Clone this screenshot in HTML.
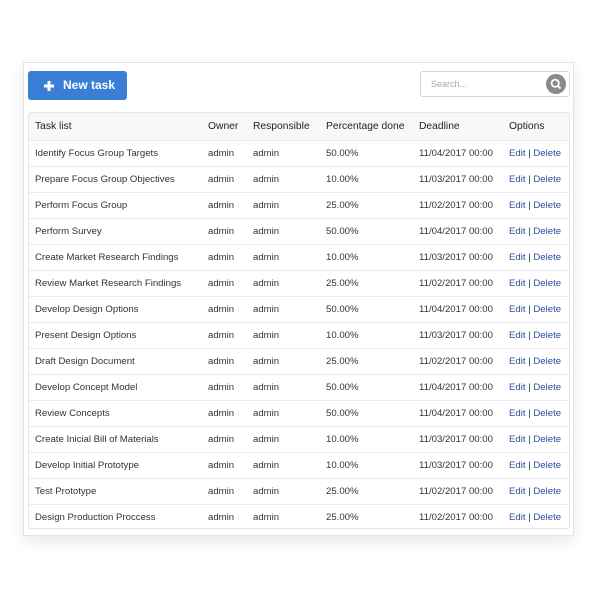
<!DOCTYPE html>
<html><head><style>
body{margin:0;width:600px;height:600px;background:#fff;font-family:"Liberation Sans",Arial,sans-serif;position:relative;}
.card{position:absolute;left:23px;top:62px;width:551px;height:474px;border:1px solid #e3e3e8;box-shadow:0 6px 14px rgba(0,0,0,0.09);background:#fff;box-sizing:border-box;}
.btn{position:absolute;left:28px;top:71px;width:99px;height:29px;background:#3a7fd5;border-radius:3px;color:#fff;font-weight:bold;font-size:12px;line-height:29px;}
.btn svg{position:absolute;left:16px;top:10px;}
.btn .t{position:absolute;left:35px;}
.search{position:absolute;left:420px;top:71px;width:150px;height:26px;border:1px solid #d8d8dc;border-radius:3px;box-sizing:border-box;}
.search span{position:absolute;left:10px;top:7px;font-size:9px;color:#aaa;}
.search .ic{position:absolute;left:125px;top:2px;width:20px;height:20px;border-radius:50%;background:#8a8a8a;}
.tbl{position:absolute;left:28px;top:112px;width:542px;height:417px;border:1px solid #e6e6ea;border-radius:3px;box-sizing:border-box;overflow:hidden;}
.row{position:absolute;left:0;width:542px;height:26px;border-top:1px solid #ebebef;font-size:9.6px;color:#333;line-height:25px;}
.row.h{border-top:none;background:#f7f8fa;height:27px;line-height:27px;font-size:10.3px;color:#222;}
.row div{position:absolute;top:0;white-space:nowrap;}
.c1{left:6px}.c2{left:179px}.c3{left:224px}.c4{left:297px}.c5{left:390px}.c6{left:480px}
.c6 a{color:#2a4f9a;text-decoration:none}
</style></head><body>
<div class="card"></div>
<div class="btn"><svg width="10" height="10"><rect x="3.5" y="0" width="3" height="10" fill="#fff"/><rect x="0" y="3.5" width="10" height="3" fill="#fff"/></svg><span class="t">New task</span></div>
<div class="search"><span>Search...</span><div class="ic"><svg width="20" height="20"><circle cx="9.2" cy="9.2" r="3.6" stroke="#fff" stroke-width="1.8" fill="none"/><line x1="11.8" y1="11.8" x2="14.5" y2="14.5" stroke="#fff" stroke-width="2"/></svg></div></div>
<div class="tbl">
<div class="row h" style="top:0"><div class="c1">Task list</div><div class="c2">Owner</div><div class="c3">Responsible</div><div class="c4">Percentage done</div><div class="c5">Deadline</div><div class="c6">Options</div></div>
<script>
var d=[["Identify Focus Group Targets","50.00%","11/04"],["Prepare Focus Group Objectives","10.00%","11/03"],["Perform Focus Group","25.00%","11/02"],["Perform Survey","50.00%","11/04"],["Create Market Research Findings","10.00%","11/03"],["Review Market Research Findings","25.00%","11/02"],["Develop Design Options","50.00%","11/04"],["Present Design Options","10.00%","11/03"],["Draft Design Document","25.00%","11/02"],["Develop Concept Model","50.00%","11/04"],["Review Concepts","50.00%","11/04"],["Create Inicial Bill of Materials","10.00%","11/03"],["Develop Initial Prototype","10.00%","11/03"],["Test Prototype","25.00%","11/02"],["Design Production Proccess","25.00%","11/02"]];
d.forEach(function(r,i){document.write('<div class="row" style="top:'+(27+i*26)+'px"><div class="c1">'+r[0]+'</div><div class="c2">admin</div><div class="c3">admin</div><div class="c4">'+r[1]+'</div><div class="c5">'+r[2]+'/2017 00:00</div><div class="c6"><a>Edit</a> | <a>Delete</a></div></div>');});
</script>
</div>
</body></html>
